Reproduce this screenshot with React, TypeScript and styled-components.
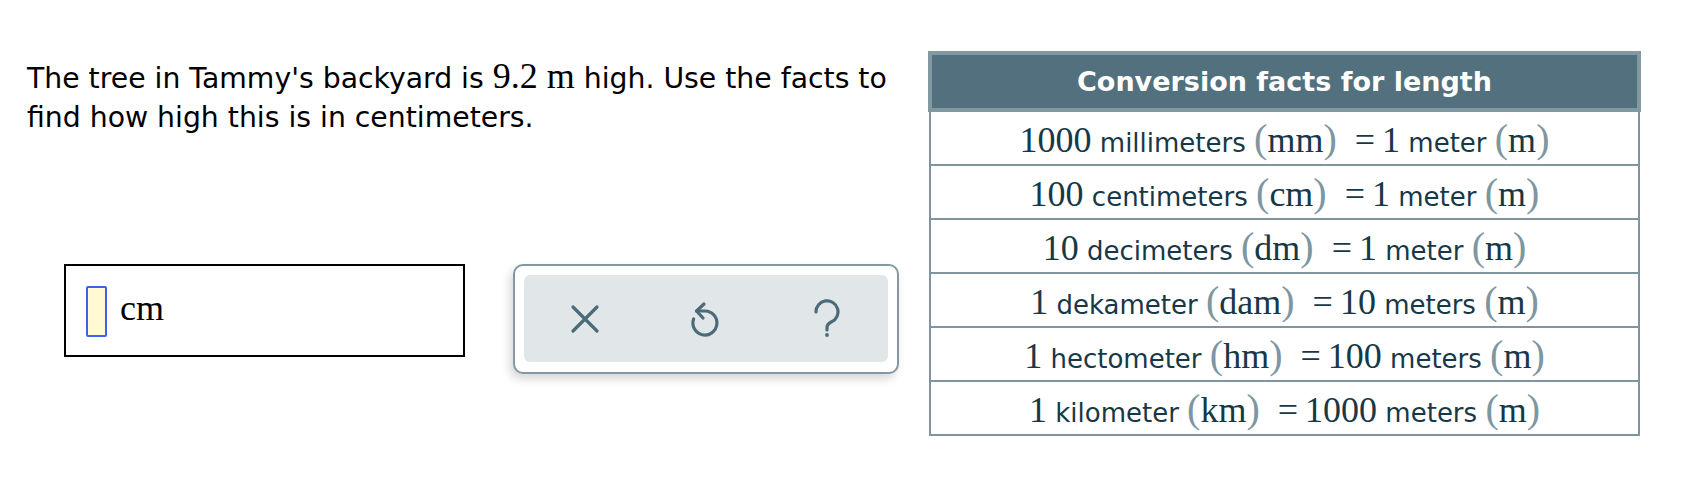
import React from "react";
import styled, { createGlobalStyle } from "styled-components";

const GlobalStyle = createGlobalStyle`
  body {
    margin: 0;
    background: #fff;
    font-family: "DejaVu Sans", Verdana, sans-serif;
  }
`;

const Page = styled.div`
  display: flex;
  align-items: flex-start;
  padding: 51px 0 0 27px;
`;

const Left = styled.div`
  width: 901px;
  flex-shrink: 0;
`;

const Prompt = styled.p`
  margin: 6px 0 0 0;
  width: 880px;
  font-size: 28.3px;
  line-height: 39px;
  color: #000;
`;

const Math = styled.span<{ size?: number }>`
  font-family: "Liberation Serif", "Times New Roman", serif;
  font-size: ${({ size }) => size ?? 36}px;
`;

const AnswerRow = styled.div`
  display: flex;
  align-items: flex-start;
  gap: 48px;
  margin-top: 127px;
  padding-left: 37px;
`;

const AnswerBox = styled.div`
  box-sizing: border-box;
  width: 401px;
  height: 93px;
  border: 2px solid #000;
  display: flex;
  align-items: center;
  padding-left: 20px;
  gap: 13px;
`;

const Cursor = styled.div`
  box-sizing: border-box;
  width: 21px;
  height: 51px;
  margin-top: 2px;
  border: 2px solid #3f5ff0;
  border-radius: 2px;
  background: #fff9d4;
`;

const Unit = styled.span`
  font-family: "Liberation Serif", "Times New Roman", serif;
  font-size: 36px;
  color: #000;
  line-height: 1;
  margin-top: -6px;
`;

const Toolbar = styled.div`
  box-sizing: border-box;
  width: 386px;
  height: 110px;
  border: 2px solid #8299a3;
  border-radius: 10px;
  padding: 9px;
  background: #fff;
  box-shadow: -3px 5px 10px rgba(0, 0, 0, 0.16);
`;

const ToolbarInner = styled.div`
  display: flex;
  height: 87px;
  border-radius: 6px;
  background: #e1e6e9;
`;

const ToolButton = styled.button`
  flex: 1;
  display: flex;
  align-items: center;
  justify-content: center;
  border: none;
  background: transparent;
  padding: 0;
  color: #4b6b78;
  cursor: pointer;
`;

const FactsTable = styled.div`
  width: 713px;
  flex-shrink: 0;
  display: flex;
  flex-direction: column;
`;

const Header = styled.div`
  box-sizing: border-box;
  height: 61px;
  border: 4px solid #8299a3;
  background: #52707d;
  color: #fff;
  font-weight: bold;
  font-size: 27px;
  display: flex;
  align-items: center;
  justify-content: center;
`;

const Row = styled.div`
  box-sizing: border-box;
  height: 54px;
  margin: 0 1px;
  border: 2px solid #7f949e;
  border-top: none;
  display: flex;
  align-items: center;
  justify-content: center;
`;

const RowText = styled.span`
  font-size: 26px;
  color: #173847;
  white-space: nowrap;
`;

const Paren = styled.span`
  font-family: "Liberation Serif", "Times New Roman", serif;
  font-size: 40px;
  font-weight: 300;
  color: #7d96a1;
`;

const Eq = styled.span`
  font-family: "Liberation Serif", "Times New Roman", serif;
  font-size: 36px;
  margin: 0 7px 0 18px;
`;

interface Fact {
  n1: string;
  w1: string;
  u1: string;
  n2: string;
  w2: string;
  u2: string;
}

const facts: Fact[] = [
  { n1: "1000", w1: "millimeters", u1: "mm", n2: "1", w2: "meter", u2: "m" },
  { n1: "100", w1: "centimeters", u1: "cm", n2: "1", w2: "meter", u2: "m" },
  { n1: "10", w1: "decimeters", u1: "dm", n2: "1", w2: "meter", u2: "m" },
  { n1: "1", w1: "dekameter", u1: "dam", n2: "10", w2: "meters", u2: "m" },
  { n1: "1", w1: "hectometer", u1: "hm", n2: "100", w2: "meters", u2: "m" },
  { n1: "1", w1: "kilometer", u1: "km", n2: "1000", w2: "meters", u2: "m" },
];

const ClearIcon = () => (
  <svg width="40" height="40" viewBox="0 0 40 40" fill="none" stroke="currentColor" strokeWidth="3.2" strokeLinecap="round">
    <path d="M8 8L32 32M32 8L8 32" />
  </svg>
);

const UndoIcon = () => (
  <svg width="40" height="40" viewBox="0 0 40 40" fill="none" stroke="currentColor" strokeWidth="3.2" strokeLinecap="round" strokeLinejoin="round">
    <path d="M18 5L10.5 12L17 19" />
    <path d="M10.5 12H19A12 12 0 1 1 7.6 20" />
  </svg>
);

const HelpIcon = () => (
  <svg width="40" height="40" viewBox="0 0 40 40" fill="none" stroke="currentColor" strokeWidth="3.2" strokeLinecap="round">
    <path d="M9 13a11 11 0 1 1 15.6 9.8c-2.4 1.2-4.6 3-4.6 5.7v2.5" />
    <circle cx="20" cy="36" r="1.9" fill="currentColor" stroke="none" />
  </svg>
);

export default function App() {
  return (
    <>
      <GlobalStyle />
      <Page>
        <Left>
          <Prompt>
            The tree in Tammy's backyard is <Math>9.2 m</Math> high. Use the facts to find how high this is in centimeters.
          </Prompt>
          <AnswerRow>
            <AnswerBox>
              <Cursor />
              <Unit>cm</Unit>
            </AnswerBox>
            <Toolbar>
              <ToolbarInner>
                <ToolButton aria-label="Clear">
                  <ClearIcon />
                </ToolButton>
                <ToolButton aria-label="Undo">
                  <UndoIcon />
                </ToolButton>
                <ToolButton aria-label="Help">
                  <HelpIcon />
                </ToolButton>
              </ToolbarInner>
            </Toolbar>
          </AnswerRow>
        </Left>
        <FactsTable>
          <Header>Conversion facts for length</Header>
          {facts.map((f) => (
            <Row key={f.w1}>
              <RowText>
                <Math>{f.n1}</Math> {f.w1} <Paren>(</Paren>
                <Math>{f.u1}</Math>
                <Paren>)</Paren>
                <Eq>=</Eq>
                <Math>{f.n2}</Math> {f.w2} <Paren>(</Paren>
                <Math>{f.u2}</Math>
                <Paren>)</Paren>
              </RowText>
            </Row>
          ))}
        </FactsTable>
      </Page>
    </>
  );
}
